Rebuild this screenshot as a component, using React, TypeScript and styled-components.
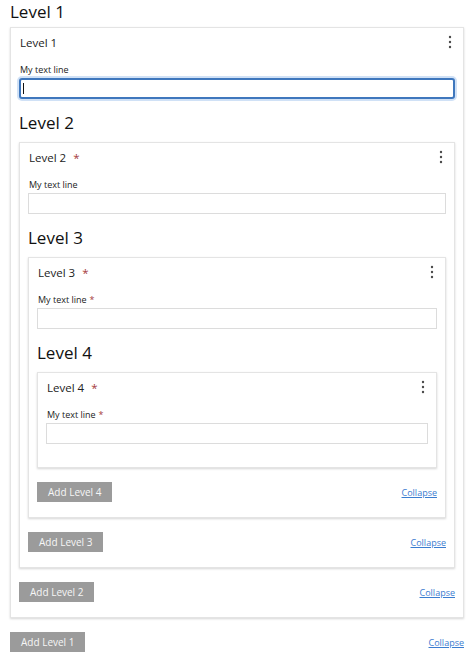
import React from 'react'
import styled, { createGlobalStyle, css } from 'styled-components'

const MAX_LEVEL = 4

const GlobalStyle = createGlobalStyle`
    * {
        box-sizing: border-box;
    }
    body {
        margin: 0;
        background: #ffffff;
        font-family: "Open Sans", "Noto Sans", sans-serif;
        color: #1a1a1a;
    }
`

const Kebab = () => (
  <svg width="10" height="16" viewBox="0 0 10 16" aria-hidden="true">
    <circle cx="5" cy="3" r="1.2" fill="#4a4a4a" />
    <circle cx="5" cy="8" r="1.2" fill="#4a4a4a" />
    <circle cx="5" cy="13" r="1.2" fill="#4a4a4a" />
  </svg>
)

type SectionProps = {
  level: number
}

const Section = ({ level }: SectionProps) => {
  const nested = level > 1
  return (
    <StyledSection>
      <Heading $nested={nested}>Level {level}</Heading>
      <Card>
        <CardHeader>
          <Title>
            Level {level}
            {level > 1 && <TitleMark>*</TitleMark>}
          </Title>
          <MenuButton type="button">
            <Kebab />
          </MenuButton>
        </CardHeader>
        <Field>
          <Label>
            My text line
            {level > 2 && <LabelMark>*</LabelMark>}
          </Label>
          <InputWrap>
            <TextInput type="text" $focused={level === 1} />
            {level === 1 && <Caret />}
          </InputWrap>
        </Field>
        {level < MAX_LEVEL && <Section level={level + 1} />}
      </Card>
      <Footer>
        <AddButton type="button">Add Level {level}</AddButton>
        <CollapseLink href="#">Collapse</CollapseLink>
      </Footer>
    </StyledSection>
  )
}

export default function App() {
  return (
    <>
      <GlobalStyle />
      <Page>
        <Section level={1} />
      </Page>
    </>
  )
}

const Page = styled.main`
    padding: 0 10px 8px;
`

const StyledSection = styled.section`
    display: flex;
    flex-direction: column;
`

const Heading = styled.h2<{ $nested: boolean }>`
    margin: ${(p) => (p.$nested ? '4px 0 7px' : '0 0 3px')};
    font-weight: 400;
    font-size: 17px;
    line-height: 24px;
    color: #111111;
`

const Card = styled.div`
    display: flex;
    flex-direction: column;
    padding: 0 8px 15px;
    background: #ffffff;
    border: 1px solid #e4e4e4;
    box-shadow: 0 1px 2px rgba(0, 0, 0, 0.16);
`

const CardHeader = styled.div`
    display: flex;
    align-items: center;
    justify-content: space-between;
    height: 28px;
    padding-left: 1px;
`

const Title = styled.span`
    font-size: 11.5px;
    color: #222222;
`

const TitleMark = styled.span`
    margin-left: 7px;
    color: #a53a3a;
`

const MenuButton = styled.button`
    display: flex;
    padding: 0;
    border: none;
    background: none;
    cursor: pointer;
`

const Field = styled.div`
    display: flex;
    flex-direction: column;
    row-gap: 2px;
    margin: 8px 0 8px;
`

const Label = styled.label`
    padding-left: 1px;
    font-size: 9px;
    line-height: 12px;
    color: #222222;
`

const LabelMark = styled.span`
    margin-left: 3px;
    color: #a53a3a;
`

const InputWrap = styled.div`
    position: relative;
`

const TextInput = styled.input<{ $focused: boolean }>`
    display: block;
    width: 100%;
    height: 21px;
    margin: 0;
    padding: 0 6px;
    font: inherit;
    font-size: 10px;
    border: 1px solid #dcdcdc;
    border-radius: 0;
    background: #ffffff;
    outline: none;

    ${(p) =>
      p.$focused &&
      css`
        border: 2px solid #3f77bd;
        border-radius: 3px;
        box-shadow: 0 0 0 2px rgba(120, 170, 230, 0.35);
      `}
`

const Caret = styled.span`
    position: absolute;
    left: 4px;
    top: 5px;
    width: 1px;
    height: 11px;
    background: #111111;
`

const Footer = styled.div`
    display: flex;
    align-items: center;
    justify-content: space-between;
    margin-top: 14px;
`

const AddButton = styled.button`
    height: 20px;
    padding: 0 11px;
    border: none;
    background: #9b9b9b;
    color: #f6f6f6;
    font-family: inherit;
    font-size: 10px;
    cursor: pointer;
`

const CollapseLink = styled.a`
    font-size: 9px;
    color: #3b7dd0;
    text-decoration: underline;
`
